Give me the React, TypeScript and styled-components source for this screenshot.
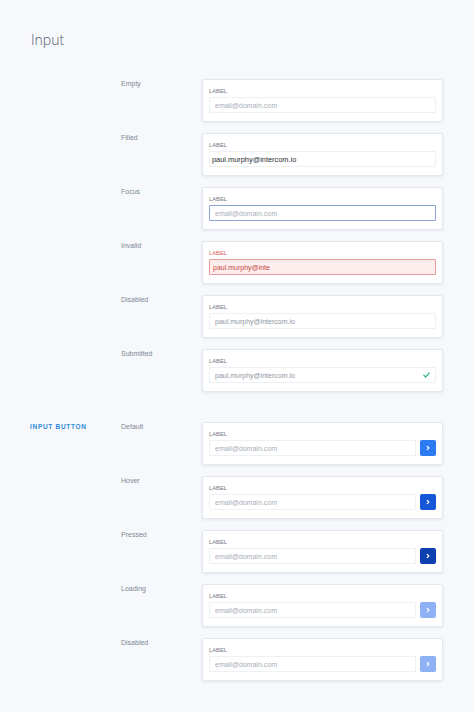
import styled, { createGlobalStyle, css } from "styled-components";

const GlobalStyle = createGlobalStyle`
  * { box-sizing: border-box; }
  html, body { margin: 0; padding: 0; background: #f6f8fb; }
  body { font-family: "Liberation Sans", Arial, sans-serif; }
`;

type FieldState =
  | "empty"
  | "filled"
  | "focus"
  | "invalid"
  | "disabled"
  | "submitted";

type ButtonState = "default" | "hover" | "pressed" | "loading" | "disabled";

const Page = styled.div`
  min-height: 712px;
  padding: 32px 31px 30px 30px;
`;

const Title = styled.h1`
  margin: 0 0 31px 1px;
  font-family: "Open Sans", "Liberation Sans", sans-serif;
  font-weight: 300;
  font-size: 14px;
  line-height: 16px;
  color: #4f5a6d;
`;

const Section = styled.section<{ spaced?: boolean }>`
  display: flex;
  margin-top: ${({ spaced }) => (spaced ? "30px" : "0")};
`;

const SectionLabel = styled.div`
  width: 91px;
  flex-shrink: 0;
  padding-top: 1px;
  font-size: 6.5px;
  line-height: 8px;
  font-weight: 700;
  letter-spacing: 0.7px;
  color: #2f88d8;
`;

const Rows = styled.div`
  display: flex;
  flex-direction: column;
  gap: 11px;
`;

const Row = styled.div`
  display: flex;
`;

const RowLabel = styled.div`
  width: 81px;
  flex-shrink: 0;
  padding-top: 1px;
  font-size: 7px;
  line-height: 8px;
  color: #7f8898;
`;

const Card = styled.div`
  width: 241px;
  height: 43px;
  padding: 8px 6px;
  background: #ffffff;
  border: 1px solid #e3e7ee;
  border-radius: 2px;
  box-shadow: 0 1px 3px rgba(30, 45, 70, 0.08);
`;

const Label = styled.div<{ invalid?: boolean }>`
  height: 6px;
  margin-bottom: 3px;
  font-size: 5.8px;
  line-height: 6px;
  color: ${({ invalid }) => (invalid ? "#e0605c" : "#6f7888")};
`;

const InputRow = styled.div`
  display: flex;
  gap: 4px;
`;

const fieldStyles = {
  empty: css`
    color: #a7aeb9;
  `,
  filled: css`
    color: #272c36;
    font-size: 7.4px;
    padding-left: 2px;
  `,
  focus: css`
    color: #a7aeb9;
    border-color: #8ba4d8;
  `,
  invalid: css`
    color: #c84a48;
    background: #fdeded;
    border-color: #e79b9a;
    padding-left: 3px;
  `,
  disabled: css`
    color: #8f97a4;
  `,
  submitted: css`
    color: #8f97a4;
  `,
};

const Field = styled.div<{ state: FieldState }>`
  position: relative;
  flex: 1;
  height: 16px;
  padding: 0 5px;
  display: flex;
  align-items: center;
  border: 1px solid #eef0f4;
  border-radius: 1px;
  background: #ffffff;
  font-size: 7px;
  ${({ state }) => fieldStyles[state]}
`;

const Check = styled.svg`
  position: absolute;
  right: 5px;
  top: 4px;
`;

const buttonColors: Record<ButtonState, string> = {
  default: "#2b7cf2",
  hover: "#1557d6",
  pressed: "#0c3fb0",
  loading: "#8db1f4",
  disabled: "#8db1f4",
};

const SubmitButton = styled.div<{ state: ButtonState }>`
  width: 16px;
  height: 16px;
  flex-shrink: 0;
  border-radius: 2px;
  background: ${({ state }) => buttonColors[state]};
  display: flex;
  align-items: center;
  justify-content: center;
`;

const Chevron = () => (
  <svg width="6" height="6" viewBox="0 0 6 6">
    <path
      d="M2.2 1.3 L3.9 3 L2.2 4.7"
      fill="none"
      stroke="#ffffff"
      strokeWidth="1.2"
      strokeLinecap="round"
      strokeLinejoin="round"
    />
  </svg>
);

const inputRows: { name: string; state: FieldState; value: string }[] = [
  { name: "Empty", state: "empty", value: "email@domain.com" },
  { name: "Filled", state: "filled", value: "paul.murphy@intercom.io" },
  { name: "Focus", state: "focus", value: "email@domain.com" },
  { name: "Invalid", state: "invalid", value: "paul.murphy@inte" },
  { name: "Disabled", state: "disabled", value: "paul.murphy@intercom.io" },
  { name: "Submitted", state: "submitted", value: "paul.murphy@intercom.io" },
];

const buttonRows: { name: string; state: ButtonState }[] = [
  { name: "Default", state: "default" },
  { name: "Hover", state: "hover" },
  { name: "Pressed", state: "pressed" },
  { name: "Loading", state: "loading" },
  { name: "Disabled", state: "disabled" },
];

export default function App() {
  return (
    <>
      <GlobalStyle />
      <Page>
        <Title>Input</Title>
        <Section>
          <SectionLabel />
          <Rows>
            {inputRows.map((row) => (
              <Row key={row.name}>
                <RowLabel>{row.name}</RowLabel>
                <Card>
                  <Label invalid={row.state === "invalid"}>LABEL</Label>
                  <InputRow>
                    <Field state={row.state}>
                      {row.value}
                      {row.state === "submitted" && (
                        <Check width="7" height="6" viewBox="0 0 7 6">
                          <path
                            d="M0.8 3.2 L2.6 5 L6.2 0.9"
                            fill="none"
                            stroke="#2fb486"
                            strokeWidth="1.2"
                            strokeLinecap="round"
                            strokeLinejoin="round"
                          />
                        </Check>
                      )}
                    </Field>
                  </InputRow>
                </Card>
              </Row>
            ))}
          </Rows>
        </Section>
        <Section spaced>
          <SectionLabel>INPUT BUTTON</SectionLabel>
          <Rows>
            {buttonRows.map((row) => (
              <Row key={row.name}>
                <RowLabel>{row.name}</RowLabel>
                <Card>
                  <Label>LABEL</Label>
                  <InputRow>
                    <Field state="empty">email@domain.com</Field>
                    <SubmitButton state={row.state}>
                      <Chevron />
                    </SubmitButton>
                  </InputRow>
                </Card>
              </Row>
            ))}
          </Rows>
        </Section>
      </Page>
    </>
  );
}
